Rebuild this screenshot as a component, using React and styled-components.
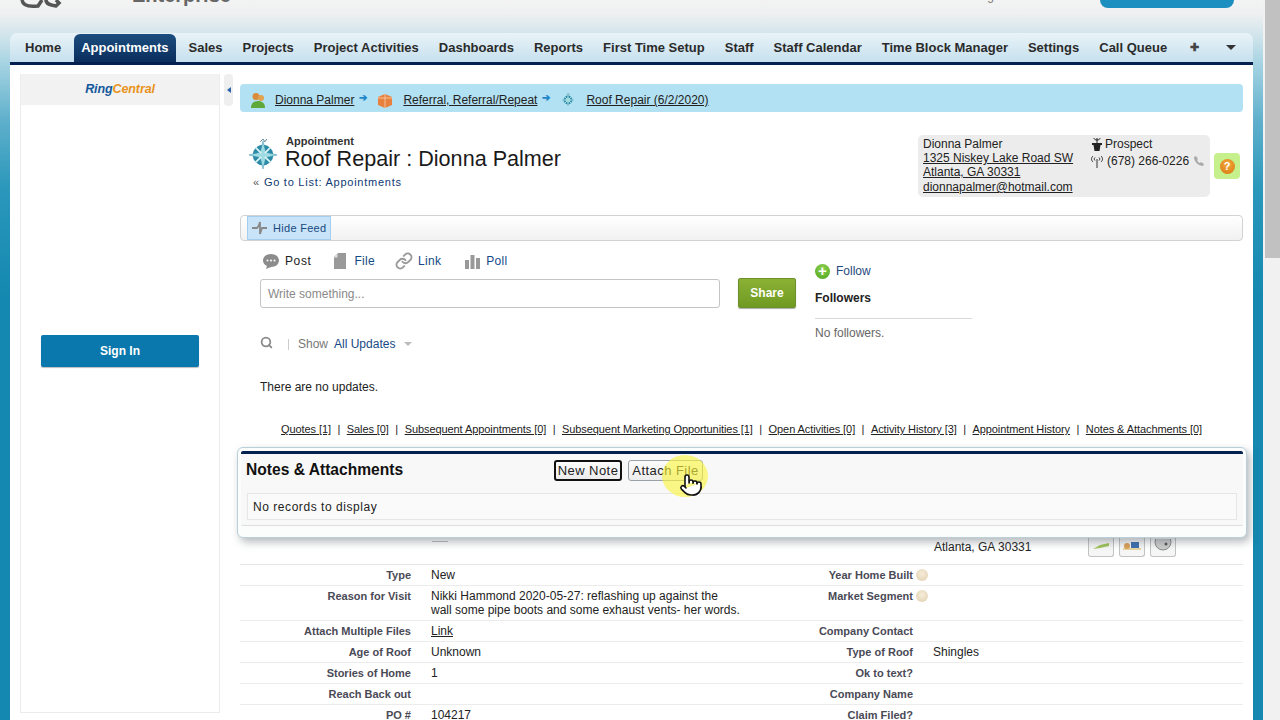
import React from "react";
import styled, { createGlobalStyle } from "styled-components";
import { Search, Link as LinkIcon, Pointer } from "lucide-react";

const Global = createGlobalStyle`
  html, body { margin: 0; padding: 0; height: 720px; overflow: hidden; background: #fff; }
  body { font-family: "Liberation Sans", Arial, sans-serif; font-size: 12px; color: #1a1a1a; }
  * { box-sizing: border-box; }
`;

const Page = styled.div`display: flex; width: 1280px; height: 720px; overflow: hidden; position: relative;`;
const Shell = styled.div`
  width: 1263px; height: 720px; padding: 0 10px;
  display: flex; flex-direction: column;
  background: linear-gradient(180deg, #f3f3f3 0, #eef0f1 14px, #d3e5ec 34px, #a5d3e2 64px, #5fb0cc 120px, #2a97bb 190px, #1488b0 300px);
`;
const Scrollbar = styled.div`width: 17px; height: 720px; padding-left: 2px; background: #f1f1f1;`;
const Thumb = styled.div`width: 15px; height: 258px; background: #c1c1c1;`;

const Header = styled.header`height: 33px; flex: none; display: flex; align-items: flex-start; overflow: hidden; color: #555;`;
const LogoMark = styled.svg`width: 50px; height: 10px; margin: 0 0 0 6px; flex: none;`;
const Brand = styled.div`font-size: 20px; font-weight: 700; line-height: 20px; margin: -15px 0 0 66px; color: #666; flex: none;`;
const LoginHint = styled.div`margin: -10px 0 0 743px; font-size: 12px; line-height: 12px; color: #777; flex: none;`;
const TopButton = styled.div`width: 134px; height: 8px; margin-left: 97px; flex: none; background: #1b8fc0; border-radius: 0 0 8px 8px;`;

const Nav = styled.nav`
  height: 32px; flex: none; display: flex; align-items: flex-end; gap: 6px; padding: 0 0 3px 8px;
  border-bottom: 3px solid #03204f; border-radius: 7px 7px 0 0;
  background: linear-gradient(180deg, #e9f3f8, #c6e0ee);
`;
const Tab = styled.div`
  height: 28px; line-height: 27px; padding: 0 7px; font-size: 13px; font-weight: 700; white-space: nowrap;
  color: ${p => (p.$active ? "#fff" : "#2b2b2b")};
  background: ${p => (p.$active ? "linear-gradient(180deg,#1b4d7e,#0a2e5d)" : "transparent")};
  border-radius: 6px 6px 0 0;
  margin-bottom: -3px;
`;
const PlusTab = styled(Tab)`margin-left: 6px; color: #444; font-size: 11px; padding: 0 4px;`;
const CaretTab = styled.div`
  width: 0; height: 0; margin: 0 0 9px 17px;
  border-left: 5px solid transparent; border-right: 5px solid transparent; border-top: 5px solid #333;
`;

const Content = styled.div`flex: 1; background: #fff; display: flex; padding: 9px 10px 0 10px; position: relative; min-height: 0;`;
const Side = styled.aside`
  width: 200px; height: 639px; flex: none; display: flex; flex-direction: column; align-items: center;
  border: solid #ececec; border-width: 0 1px 1px 1px;
`;
const SideHead = styled.div`align-self: stretch; height: 31px; padding-bottom: 2px; background: #f2f2f2; display: flex; justify-content: center; align-items: center; font-size: 12.5px; font-weight: 700; font-style: italic; letter-spacing: -0.1px;`;
const Ring = styled.span`color: #14589c;`;
const Central = styled.span`color: #e8921d;`;
const SignIn = styled.div`
  width: 158px; height: 32px; margin-top: 230px; display: flex; align-items: center; justify-content: center;
  background: #0a78ad; color: #fff; font-weight: 700; font-size: 12px; border-radius: 2px; box-shadow: 0 1px 1px #0004;
`;
const Handle = styled.div`
  width: 9px; height: 32px; margin: 0 7px 0 4px; flex: none; border-radius: 4px; background: #efefef;
  display: flex; align-items: center; justify-content: center;
`;
const HandleArrow = styled.div`width: 0; height: 0; border-top: 3px solid transparent; border-bottom: 3px solid transparent; border-right: 4px solid #2a62a8;`;

const Main = styled.main`width: 1003px; flex: none; display: flex; flex-direction: column;`;
const Crumbs = styled.div`
  height: 28px; margin-top: 10px; flex: none; display: flex; align-items: center; background: #b2e1f3; border-radius: 4px;
  padding: 4px 0 0 10px; color: #222; font-size: 12px;
`;
const Crumb = styled.a`text-decoration: underline; color: #222; margin-left: ${p => p.$ml || 10}px; white-space: nowrap;`;
const CrumbArrow = styled.span`color: #1e86c9; font-size: 10px; margin: -5px 0 0 5px; font-weight: 700;`;
const CrumbIcon = styled.svg`width: 16px; height: 16px; flex: none; margin-left: ${p => p.$ml || 0}px;`;

const TitleRow = styled.div`height: 103px; flex: none; display: flex; position: relative;`;
const TitleIcon = styled.svg`width: 30px; height: 36px; margin: 24px 0 0 8px; flex: none;`;
const TitleText = styled.div`display: flex; flex-direction: column; padding-top: 24px; margin-left: 7px;`;
const Kicker = styled.div`font-size: 11px; line-height: 11px; font-weight: 700; color: #333; padding-left: 1px;`;
const Heading = styled.h1`margin: 0; font-size: 21.6px; line-height: 24px; font-weight: 400; color: #1a1a1a;`;
const BackLink = styled.div`font-size: 11px; line-height: 14px; margin: 4px 0 0 -32px; letter-spacing: 0.75px; color: #0f3a74;`;
const Quote = styled.span`color: #555; margin-right: 4px;`;
const ContactCard = styled.div`
  width: 292px; height: 62px; margin: 23px 0 0 auto; background: #ececec; border-radius: 5px; padding: 2px 5px;
  display: flex; font-size: 12px; line-height: 14px; color: #222; flex: none;
`;
const Address = styled.div`width: 168px; flex: none;`;
const UL = styled.div`text-decoration: underline;`;
const Email = styled(UL)`margin-top: 1px;`;
const Status = styled.div`display: flex; align-items: center; gap: 2px; height: 14px;`;
const PhoneRow = styled(Status)`margin-top: 3px; gap: 4px;`;
const StatusCol = styled.div`flex: none;`;
const SmallIcon = styled.svg`width: 12px; height: 14px; flex: none;`;
const HelpBox = styled.div`
  width: 26px; height: 26px; margin: 41px 3px 0 4px; flex: none; background: #c6f08c; border-radius: 4px;
  display: flex; align-items: center; justify-content: center;
`;
const HelpDot = styled.div`
  width: 15px; height: 15px; border-radius: 50%; background: radial-gradient(circle at 50% 35%, #f6a93a, #d5760f);
  color: #fff; font-size: 11px; font-weight: 700; line-height: 15px; text-align: center;
`;

const FeedBar = styled.div`
  height: 26px; flex: none; border: 1px solid #d2d2d2; border-radius: 4px; background: linear-gradient(180deg,#fff,#f1f1f1);
  padding-left: 6px; display: flex;
`;
const HideFeed = styled.div`
  width: 84px; height: 100%; background: #c9e4f8; border: 1px solid #a5cdee; display: flex; align-items: center; gap: 5px;
  padding-left: 4px; color: #16497f; font-size: 11px; letter-spacing: 0.3px;
`;
const FeedArea = styled.div`display: flex; flex: none; height: 136px;`;
const Publisher = styled.div`width: 575px; padding: 10px 0 0 20px; flex: none;`;
const PubTabs = styled.div`display: flex; height: 20px; align-items: center; padding-left: 2px;`;
const PubTab = styled.div`
  display: flex; align-items: center; gap: 5px; margin-left: ${p => p.$ml || 0}px; font-size: 12px;
  color: ${p => (p.$on ? "#222" : "#154a85")}; letter-spacing: ${p => (p.$on ? ".6px" : ".3px")};
`;
const PubIcon = styled.svg`width: 18px; height: 18px; flex: none;`;
const PubRow = styled.div`display: flex; margin-top: 7px; align-items: flex-start;`;
const WriteBox = styled.div`
  width: 460px; height: 29px; border: 1px solid #c4c4c4; border-radius: 3px; margin-top: 1px; flex: none; padding-left: 7px;
  line-height: 28px; color: #8a8a8a; font-size: 12px; background: #fff;
`;
const Share = styled.div`
  width: 58px; height: 30px; margin-left: 18px; flex: none; background: linear-gradient(180deg,#8bb134,#6f9a22);
  border: 1px solid #6d8f2c; border-radius: 2px; color: #fff; font-weight: 700; font-size: 12px;
  display: flex; align-items: center; justify-content: center; box-shadow: 0 1px 1px #0005;
`;
const Filter = styled.div`display: flex; align-items: center; margin-top: 28px; height: 16px; color: #777;`;
const FilterSearch = styled(Search)`margin-top: -4px;`;
const Sep = styled.span`width: 1px; height: 11px; background: #ccc; margin: 0 9px 0 15px;`;
const AllUpdates = styled.span`color: #154a85; margin-left: 6px;`;
const FilterCaret = styled.span`
  width: 0; height: 0; margin-left: 9px; border-left: 4px solid transparent; border-right: 4px solid transparent; border-top: 4px solid #bbb;
`;
const NoUpdates = styled.div`margin-top: 28px; color: #222;`;
const Followers = styled.div`width: 157px; padding-top: 22px; flex: none;`;
const Follow = styled.div`display: flex; align-items: center; gap: 6px; height: 16px; color: #1f4a80;`;
const FollowIcon = styled.div`
  width: 15px; height: 15px; border-radius: 50%; background: radial-gradient(circle at 50% 30%, #8ed04f, #4da51e); color: #fff;
  font-size: 15px; font-weight: 700; line-height: 14px; text-align: center;
`;
const FollowTitle = styled.div`margin-top: 12px; font-weight: 700; color: #222; line-height: 14px;`;
const FollowRule = styled.div`height: 1px; background: #d8d8d8; margin-top: 13px;`;
const FollowEmpty = styled.div`margin-top: 7px; color: #666; line-height: 14px;`;

const Related = styled.div`
  margin-top: 45px; height: 16px; flex: none; display: flex; justify-content: center; font-size: 11px; line-height: 14px; color: #222; letter-spacing: -0.08px;
`;
const RelatedLink = styled.a`text-decoration: underline; white-space: nowrap;`;
const RelatedSep = styled.span`margin: 0 6.5px;`;

const Details = styled.div`margin-top: 94px; flex: none;`;
const TopRow = styled.div`
  height: 33px; position: relative; display: grid; grid-template-columns: 192px 501px 1fr; border-bottom: 1px solid #e6e6e6;
`;
const Check = styled.div`grid-column: 2; width: 16px; height: 1px; background: #bbb; margin-top: 9px;`;
const TopAddress = styled.div`grid-column: 3; margin: 8px 0 0 1px; line-height: 14px; font-size: 12px; color: #222; white-space: nowrap;`;
const MapButtons = styled.div`display: flex; gap: 5px; position: absolute; left: 848px; top: 0;`;
const MapButton = styled.div`
  width: 26px; height: 25px; padding-top: 7px; border: 1px solid #c2c2c2; border-top: 0; border-radius: 0 0 3px 3px; background: #f6f6f6;
  display: flex; justify-content: center;
`;
const MapSvg = styled.svg`width: 22px; height: 12px;`;
const Row = styled.div`
  display: grid; grid-template-columns: 171px 20px 377px 105px 20px 1fr; border-bottom: 1px solid #ececec;
  padding: 3px 0; line-height: 14px; font-size: 12px;
`;
const Label = styled.div`text-align: right; font-weight: 700; font-size: 11px; color: #4a4a56; grid-column: ${p => p.$c};`;
const Value = styled.div`grid-column: ${p => p.$c}; color: #222;`;
const Info = styled.span`
  display: inline-block; width: 12px; height: 12px; border-radius: 50%; vertical-align: -2px; margin: 0 -15px 0 3px;
  background: radial-gradient(circle at 50% 40%, #f6ecd9, #e0cfae);
`;
const RightWrap = styled.div`grid-column: 4 / 5; text-align: right; white-space: nowrap;`;

const Overlay = styled.section`
  position: absolute; left: 227px; top: 382px; width: 1010px; height: 91px; padding: 3px 3px 0 3px;
  background: #fbfcfc; border: 1px solid #b9cfda; border-radius: 6px; box-shadow: 3px 4px 8px rgba(70,80,90,.4);
`;
const OverlayInner = styled.div`
  height: 75px; border-top: 3px solid #03204f; border-bottom: 1px solid #dedede; border-radius: 2px; background: #f8f8f8; padding: 0 5px;
`;
const OverlayHead = styled.div`display: flex; height: 39px; align-items: flex-start;`;
const OverlayTitle = styled.h3`margin: 5px 0 0 0; width: 308px; font-size: 15.6px; line-height: 21px; font-weight: 700; color: #111; flex: none;`;
const Btn = styled.div`
  width: ${p => p.$w}px; height: 21px; margin: 6px 6px 0 0; text-align: center; font-size: 13px; border-radius: 3px; color: #222; letter-spacing: .45px;
  background: linear-gradient(180deg,#fcfcfc,#ececec);
  border: ${p => (p.$focus ? "2px solid #111" : "1px solid #9aa2a8")};
  line-height: ${p => (p.$focus ? 17 : 19)}px;
  white-space: nowrap; flex: none;
`;
const Empty = styled.div`
  height: 27px; margin: 0 1px; border: 1px solid #e6e6e6; padding-left: 5px; line-height: 26px; font-size: 12px; letter-spacing: .55px; color: #222; background: #fafafa;
`;
const Glow = styled.div`position: absolute; left: 662px; top: 455px; width: 46px; height: 42px; border-radius: 50%; background: rgba(250,245,60,.62); pointer-events: none;`;
const Cursor = styled.div`position: absolute; left: 679px; top: 473px; width: 24px; height: 25px; pointer-events: none;`;

const rows = [
  { l: "Type", v: "New", r: "Year Home Built", i: true },
  { l: "Reason for Visit", v: <>Nikki Hammond 2020-05-27: reflashing up against the<br />wall some pipe boots and some exhaust vents- her words.</>, r: "Market Segment", i: true },
  { l: "Attach Multiple Files", v: <UL as="span">Link</UL>, r: "Company Contact" },
  { l: "Age of Roof", v: "Unknown", r: "Type of Roof", rv: "Shingles" },
  { l: "Stories of Home", v: "1", r: "Ok to text?" },
  { l: "Reach Back out", v: "", r: "Company Name" },
  { l: "PO #", v: "104217", r: "Claim Filed?" },
];

const tabs = ["Home", "Appointments", "Sales", "Projects", "Project Activities", "Dashboards", "Reports", "First Time Setup", "Staff", "Staff Calendar", "Time Block Manager", "Settings", "Call Queue"];
const related = ["Quotes [1]", "Sales [0]", "Subsequent Appointments [0]", "Subsequent Marketing Opportunities [1]", "Open Activities [0]", "Activity History [3]", "Appointment History", "Notes & Attachments [0]"];

const Compass = () => (
  <g>
    <circle cx="16" cy="20" r="11" fill="#2c8aa5" />
    <path d="M16 5l3 12 12 3-12 3-3 12-3-12-12-3 12-3z" fill="#9fdbe3" stroke="#2c8aa5" strokeWidth=".5" />
    <path d="M8 12l6 6M24 12l-6 6M8 28l6-6M24 28l-6-6" stroke="#d7f2f5" strokeWidth="2" />
    <path d="M13 6l3-3 2 3 2-3" fill="none" stroke="#5a7f92" strokeWidth="1" />
  </g>
);

export default function App() {
  return (
    <Page>
      <Global />
      <Shell>
        <Header>
          <LogoMark viewBox="0 0 50 10"><path d="M6 0c1 6 8 7 16 6l4-6M30 0c0 4 4 5 10 6l3-3-3-3" fill="none" stroke="#555" strokeWidth="3.500" /></LogoMark>
          <Brand>Enterprise</Brand>
          <LoginHint>Login</LoginHint>
          <TopButton />
        </Header>
        <Nav>
          {tabs.map(t => <Tab key={t} $active={t === "Appointments"}>{t}</Tab>)}
          <PlusTab>✚</PlusTab>
          <CaretTab />
        </Nav>
        <Content>
          <Side>
            <SideHead><Ring>Ring</Ring><Central>Central</Central></SideHead>
            <SignIn>Sign In</SignIn>
          </Side>
          <Handle><HandleArrow /></Handle>
          <Main>
            <Crumbs>
              <CrumbIcon viewBox="0 0 16 16"><circle cx="6" cy="4.500" r="3.500" fill="#d98a3a" /><circle cx="11" cy="6" r="3" fill="#e2a24e" /><path d="M1 16c0-5 3-7 7-7s7 2 7 7z" fill="#5fa83a" /></CrumbIcon>
              <Crumb $ml={9}>Dionna Palmer</Crumb>
              <CrumbArrow>➔</CrumbArrow>
              <CrumbIcon $ml={10} viewBox="0 0 16 16"><path d="M1 5l7-3 7 3v8l-7 3-7-3z" fill="#e8803e" /><path d="M8 2v14M1 6h14" stroke="#f6c29a" strokeWidth="1" /></CrumbIcon>
              <Crumb $ml={10}>Referral, Referral/Repeat</Crumb>
              <CrumbArrow>➔</CrumbArrow>
              <CrumbIcon $ml={10} viewBox="0 0 32 40"><Compass /></CrumbIcon>
              <Crumb $ml={10}>Roof Repair (6/2/2020)</Crumb>
            </Crumbs>
            <TitleRow>
              <TitleIcon viewBox="0 0 32 38"><Compass /></TitleIcon>
              <TitleText>
                <Kicker>Appointment</Kicker>
                <Heading>Roof Repair : Dionna Palmer</Heading>
                <BackLink><Quote>«</Quote>Go to List: Appointments</BackLink>
              </TitleText>
              <ContactCard>
                <Address>
                  <div>Dionna Palmer</div>
                  <UL>1325 Niskey Lake Road SW</UL>
                  <UL>Atlanta, GA 30331</UL>
                  <Email>dionnapalmer@hotmail.com</Email>
                </Address>
                <StatusCol>
                  <Status>
                    <SmallIcon viewBox="0 0 12 14"><path d="M1 6h10v2H1zM2.500 8h7l-1 6h-5z" fill="#222" /><path d="M6 6V1M6 3c-2 0-3-1-3-2M6 3c2 0 3-1 3-2" fill="none" stroke="#222" /></SmallIcon>
                    Prospect
                  </Status>
                  <PhoneRow>
                    <SmallIcon viewBox="0 0 12 14"><path d="M6 5v9M2 2c-2 2-2 4 0 6M10 2c2 2 2 4 0 6M4 3.500c-1 1-1 2 0 3M8 3.500c1 1 1 2 0 3" fill="none" stroke="#333" /></SmallIcon>
                    (678) 266-0226
                    <SmallIcon viewBox="0 0 12 14"><path d="M1 3l2-1 2 3-1 1c1 2 2 3 3 3l1-1 3 2-1 2C6 12 1 8 1 3z" fill="#a9a9a9" /></SmallIcon>
                  </PhoneRow>
                </StatusCol>
              </ContactCard>
              <HelpBox><HelpDot>?</HelpDot></HelpBox>
            </TitleRow>
            <FeedBar>
              <HideFeed>
                <svg width="16" height="14" viewBox="0 0 16 14"><path d="M0 7h5l1.500-2L8 1v12l2-6h5" fill="none" stroke="#888" strokeWidth="1.800" /></svg>
                Hide Feed
              </HideFeed>
            </FeedBar>
            <FeedArea>
              <Publisher>
                <PubTabs>
                  <PubTab $on>
                    <PubIcon viewBox="0 0 18 18"><path d="M9 2c4.500 0 8 2.800 8 6.500S13.500 15 9 15l-5 2 1-3C2.500 13 1 11 1 8.500 1 4.800 4.500 2 9 2z" fill="#8c8c8c" /><circle cx="5.500" cy="8.500" r="1" fill="#fff" /><circle cx="9" cy="8.500" r="1" fill="#fff" /><circle cx="12.500" cy="8.500" r="1" fill="#fff" /></PubIcon>
                    Post
                  </PubTab>
                  <PubTab $ml={20}>
                    <PubIcon viewBox="0 0 18 18"><path d="M7 1h8v16H3V5z" fill="#999" /><path d="M6.500 1v4.500H2.500z" fill="#ddd" /></PubIcon>
                    File
                  </PubTab>
                  <PubTab $ml={20}><LinkIcon size={18} color="#999" strokeWidth={2.6} />Link</PubTab>
                  <PubTab $ml={22}>
                    <PubIcon viewBox="0 0 18 18"><path d="M2 8h4v9H2zM7.500 3h4v14h-4zM13 6h4v11h-4z" fill="#999" /></PubIcon>
                    Poll
                  </PubTab>
                </PubTabs>
                <PubRow>
                  <WriteBox>Write something...</WriteBox>
                  <Share>Share</Share>
                </PubRow>
                <Filter>
                  <FilterSearch size={13} color="#888" strokeWidth={3.2} />
                  <Sep />
                  Show<AllUpdates>All Updates</AllUpdates><FilterCaret />
                </Filter>
                <NoUpdates>There are no updates.</NoUpdates>
              </Publisher>
              <Followers>
                <Follow><FollowIcon>+</FollowIcon>Follow</Follow>
                <FollowTitle>Followers</FollowTitle>
                <FollowRule />
                <FollowEmpty>No followers.</FollowEmpty>
              </Followers>
            </FeedArea>
            <Related>
              {related.map((r, i) => (
                <React.Fragment key={r}>
                  {i > 0 && <RelatedSep>|</RelatedSep>}
                  <RelatedLink>{r}</RelatedLink>
                </React.Fragment>
              ))}
            </Related>
            <Details>
              <TopRow>
                <Check />
                <TopAddress>Atlanta, GA 30331</TopAddress>
                <MapButtons>
                  <MapButton><MapSvg viewBox="0 0 22 12"><path d="M3 10l7-4 9-2v3l-9 2z" fill="#9fc45a" /></MapSvg></MapButton>
                  <MapButton><MapSvg viewBox="0 0 22 12"><circle cx="6" cy="7" r="3" fill="#d9a05a" /><rect x="10" y="3" width="8" height="6" fill="#3d6fb0" /><path d="M2 10h18" stroke="#d9b04a" /></MapSvg></MapButton>
                  <MapButton><MapSvg viewBox="0 0 22 12"><circle cx="11" cy="3" r="8" fill="#ccc" stroke="#888" /><circle cx="14" cy="5" r="1.500" fill="#555" /></MapSvg></MapButton>
                </MapButtons>
              </TopRow>
              {rows.map(r => (
                <Row key={r.l}>
                  <Label $c={1}>{r.l}</Label>
                  <Value $c={3}>{r.v}</Value>
                  <RightWrap>
                    <Label $c="auto" as="span">{r.r}</Label>
                    {r.i && <Info />}
                  </RightWrap>
                  {r.rv && <Value $c={6}>{r.rv}</Value>}
                </Row>
              ))}
            </Details>
          </Main>
          <Overlay>
            <OverlayInner>
              <OverlayHead>
                <OverlayTitle>Notes &amp; Attachments</OverlayTitle>
                <Btn $focus $w={68}>New Note</Btn>
                <Btn $w={75}>Attach File</Btn>
              </OverlayHead>
              <Empty>No records to display</Empty>
            </OverlayInner>
          </Overlay>
        </Content>
      </Shell>
      <Scrollbar><Thumb /></Scrollbar>
      <Glow />
      <Cursor><Pointer size={24} color="#111" fill="#fff" strokeWidth={1.6} /></Cursor>
    </Page>
  );
}
